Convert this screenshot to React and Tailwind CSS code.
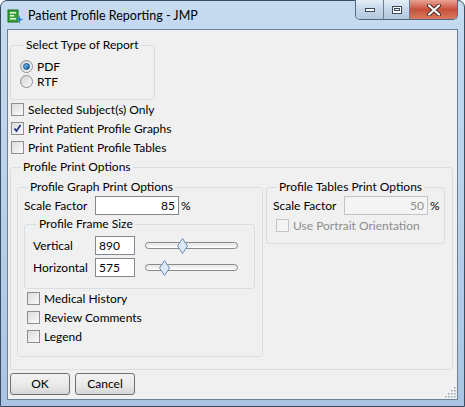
import React from 'react';

const font = "font-['Lato',sans-serif]";

function Check({ checked = false, disabled = false }) {
  return (
    <span
      className={`w-[13px] h-[13px] shrink-0 border flex items-center justify-center ${
        disabled
          ? 'border-[#c5c5c5] bg-[#f4f4f4]'
          : 'border-[#8e8f8f] bg-gradient-to-br from-[#dcdcdc] to-[#fbfbfb]'
      }`}
    >
      {checked && (
        <svg width="9" height="9" viewBox="0 0 9 9">
          <path d="M1.5 4.5 L3.5 7 L7.5 1" fill="none" stroke="#26348c" strokeWidth="1.8" />
        </svg>
      )}
    </span>
  );
}

function Radio({ checked = false }) {
  return (
    <span className="w-[13px] h-[13px] shrink-0 rounded-full border border-[#8e8f8f] bg-gradient-to-br from-[#d4d4d4] to-[#fbfbfb] flex items-center justify-center">
      {checked && <span className="w-[7px] h-[7px] rounded-full bg-gradient-to-br from-[#7dc2f0] to-[#135fa8] border border-[#1b4f86]" />}
    </span>
  );
}

function CheckRow({ label, checked, disabled, className = '' }) {
  return (
    <div className={`flex items-center gap-[4px] h-[19px] ${className}`}>
      <Check checked={checked} disabled={disabled} />
      <span className={disabled ? 'text-[#8d8d8d]' : 'text-black'}>{label}</span>
    </div>
  );
}

function Group({ label, className = '', children }) {
  return (
    <fieldset className={`border border-[#d5dfe5] rounded-[3px] ${className}`}>
      <legend className="ml-[4px] px-[2px] leading-[16px]">{label}</legend>
      {children}
    </fieldset>
  );
}

function Slider({ pos }) {
  return (
    <div className="relative w-[93px] h-[16px] flex items-center">
      <div className="w-full h-[7px] rounded-full border border-[#8a8a8a] bg-gradient-to-b from-[#e6e6e6] to-[#fdfdfd]" />
      <svg className="absolute top-0" style={{ left: pos }} width="11" height="16" viewBox="0 0 11 16">
        <path d="M5.5 0.5 L10.5 8 L5.5 15.5 L0.5 8 Z" fill="#dbe8f6" stroke="#6f8db0" />
      </svg>
    </div>
  );
}

function NumBox({ value, className = '', disabled = false }) {
  return (
    <div
      className={`h-[19px] border px-[3px] flex items-center ${
        disabled ? 'border-[#c4c4c4] bg-[#f4f4f4] text-[#8d8d8d]' : 'border-[#828790] bg-white text-black'
      } ${className}`}
    >
      {value}
    </div>
  );
}

function JmpIcon() {
  return (
    <svg width="17" height="17" viewBox="0 0 17 17">
      <rect x="1" y="2" width="10" height="12" fill="#3ca63a" stroke="#1d6b1f" />
      <rect x="3" y="4" width="6" height="1.5" fill="#e8f5e0" />
      <rect x="3" y="7" width="4" height="1.5" fill="#e8f5e0" />
      <rect x="3" y="10" width="6" height="1.5" fill="#e8f5e0" />
      <path d="M12.5 7 L13.4 10.6 L16.5 11.5 L13.4 12.4 L12.5 16 L11.6 12.4 L8.5 11.5 L11.6 10.6 Z" fill="#2a7fd0" />
    </svg>
  );
}

export default function App() {
  return (
    <div className={`w-[465px] h-[407px] ${font} text-[12px] text-black`}>
      <div className="w-full h-full rounded-t-[7px] border border-[#3b4d61] bg-gradient-to-b from-[#c6dbf0] via-[#b9d1ea] to-[#a9c5e3] flex flex-col px-[6px] pb-[6px]">
        {/* Title bar */}
        <div className="h-[28px] flex items-start shrink-0">
          <div className="flex items-center gap-[4px] pt-[6px]">
            <JmpIcon />
            <span className="text-[12.5px] text-black">Patient Profile Reporting - JMP</span>
          </div>
          <div className="ml-auto -mt-px flex shrink-0 h-[20px] rounded-b-[5px] border border-t-0 border-[#55677c] overflow-hidden">
            <div className="w-[28px] shrink-0 flex items-center justify-center border-r border-[#6d7f95] bg-gradient-to-b from-[#e4eef8] via-[#c5d6e8] to-[#b2c8df]">
              <span className="w-[10px] h-[4px] border border-[#39475a] bg-white" />
            </div>
            <div className="w-[26px] shrink-0 flex items-center justify-center border-r border-[#6d7f95] bg-gradient-to-b from-[#e4eef8] via-[#c5d6e8] to-[#b2c8df]">
              <span className="w-[10px] h-[8px] border border-[#39475a] bg-white flex items-center justify-center">
                <span className="w-[6px] h-[3px] border border-[#39475a]" />
              </span>
            </div>
            <div className="w-[47px] shrink-0 flex items-center justify-center bg-gradient-to-b from-[#e8a294] via-[#c84f3a] to-[#d77a5f]">
              <svg width="14" height="12" viewBox="0 0 14 12">
                <path d="M2 1.5 L12 10.5 M12 1.5 L2 10.5" stroke="#3b2a26" strokeWidth="4" strokeLinecap="round" />
                <path d="M2 1.5 L12 10.5 M12 1.5 L2 10.5" stroke="#ffffff" strokeWidth="2.2" strokeLinecap="round" />
              </svg>
            </div>
          </div>
        </div>

        {/* Client area */}
        <div className="relative flex-1 border border-[#6c8199] bg-[#f0f0f0] flex flex-col pl-[2px] pr-[4px]">
          <Group label="Select Type of Report" className="w-[145px] h-[63px] mt-[7px] pl-[9px] pt-[6px]">
            <div className="flex items-center gap-[4px] h-[15px]">
              <Radio checked />
              <span>PDF</span>
            </div>
            <div className="flex items-center gap-[4px] h-[15px]">
              <Radio />
              <span>RTF</span>
            </div>
          </Group>

          <div className="pl-[1px]">
            <CheckRow label="Selected Subject(s) Only" />
            <CheckRow label="Print Patient Profile Graphs" checked />
            <CheckRow label="Print Patient Profile Tables" />
          </div>

          <Group label="Profile Print Options" className="h-[211px] mt-[2px] flex items-start gap-[3px] pl-[6px] pr-[7px] pt-[4px]">
            <Group label="Profile Graph Print Options" className="w-[246px] h-[178px] pl-[6px] pr-[7px]">
              <div className="flex items-center h-[19px] mt-[1px]">
                <span className="w-[71px]">Scale Factor</span>
                <NumBox value="85" className="w-[84px] justify-end" />
                <span className="ml-[2px]">%</span>
              </div>
              <Group label="Profile Frame Size" className="h-[73px] mt-[1px] pl-[8px]">
                <div className="flex items-center h-[19px] mt-[4px]">
                  <span className="w-[62px]">Vertical</span>
                  <NumBox value="890" className="w-[40px]" />
                  <div className="ml-[10px]">
                    <Slider pos={32} />
                  </div>
                </div>
                <div className="flex items-center h-[19px] mt-[3px]">
                  <span className="w-[62px]">Horizontal</span>
                  <NumBox value="575" className="w-[40px]" />
                  <div className="ml-[10px]">
                    <Slider pos={14} />
                  </div>
                </div>
              </Group>
              <div className="pl-[3px]">
                <CheckRow label="Medical History" />
                <CheckRow label="Review Comments" />
                <CheckRow label="Legend" />
              </div>
            </Group>

            <Group label="Profile Tables Print Options" className="w-[179px] h-[65px] pl-[6px]">
              <div className="flex items-center h-[19px] mt-[1px]">
                <span className="w-[71px]">Scale Factor</span>
                <NumBox value="50" disabled className="w-[84px] justify-end" />
                <span className="ml-[2px]">%</span>
              </div>
              <CheckRow label="Use Portrait Orientation" disabled className="pl-[3px] mt-[1px]" />
            </Group>
          </Group>

          <div className="flex gap-[5px] mt-[3px]">
            {['OK', 'Cancel'].map(b => (
              <button
                key={b}
                className="w-[60px] h-[22px] rounded-[3px] border border-[#707070] bg-gradient-to-b from-[#f2f2f2] via-[#ebebeb] to-[#d6d6d6] text-black"
              >
                {b}
              </button>
            ))}
          </div>

          {/* resize grip */}
          <svg className="absolute right-[1px] bottom-[1px]" width="11" height="11" viewBox="0 0 11 11">
            {[[9, 1], [9, 4], [6, 4], [9, 7], [6, 7], [3, 7], [9, 10], [6, 10], [3, 10], [0, 10]].map(([x, y], i) => (
              <rect key={i} x={x} y={y - 1} width="1.5" height="1.5" fill="#9aa7b8" />
            ))}
          </svg>
        </div>
      </div>
    </div>
  );
}
